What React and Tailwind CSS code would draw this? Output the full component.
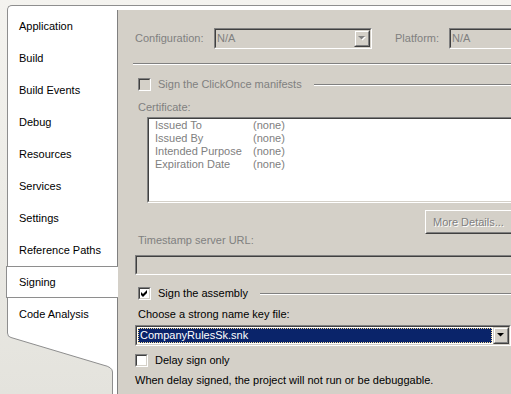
import React from "react";

const tabs = [
  "Application",
  "Build",
  "Build Events",
  "Debug",
  "Resources",
  "Services",
  "Settings",
  "Reference Paths",
  "Signing",
  "Code Analysis",
];

function Sunken({ className = "", inner = "bg-white", children }) {
  return (
    <div className={`shrink-0 border border-t-[#808080] border-l-[#808080] border-b-white border-r-white ${className}`}>
      <div className={`h-full w-full border border-t-[#404040] border-l-[#404040] border-b-[#d4d0c8] border-r-[#d4d0c8] ${inner}`}>
        {children}
      </div>
    </div>
  );
}

function Check({ checked, disabled }) {
  return (
    <Sunken className="w-[13px] h-[13px]" inner={disabled ? "bg-[#d4d0c8]" : "bg-white"}>
      {checked && (
        <svg width="9" height="9" viewBox="0 0 9 9" className="block">
          <polygon points="1,3 3,5 7,1 7,4 3,8 1,6" fill="#000" />
        </svg>
      )}
    </Sunken>
  );
}

function Arrow({ disabled }) {
  return (
    <div className="w-[16px] h-full shrink-0 border border-t-[#d4d0c8] border-l-[#d4d0c8] border-b-[#404040] border-r-[#404040] bg-[#d4d0c8]">
      <div className="h-full border border-t-white border-l-white border-b-[#808080] border-r-[#808080] flex items-center justify-center">
        <svg width="8" height="5" viewBox="0 0 8 5" className="block">
          {disabled && <polygon points="1,1 8,1 4.5,4.5" fill="#fff" />}
          <polygon points="0,0 7,0 3.5,3.5" fill={disabled ? "#808080" : "#000"} />
        </svg>
      </div>
    </div>
  );
}

function Combo({ className, disabled, children }) {
  return (
    <Sunken className={className} inner={`flex ${disabled ? "bg-[#d4d0c8]" : "bg-white"}`}>
      <div className="flex-1 min-w-0 flex">{children}</div>
      <Arrow disabled={disabled} />
    </Sunken>
  );
}

function GroupLine({ className = "" }) {
  return <div className={`flex-1 border-t border-t-[#808080] border-b border-b-white ${className}`} />;
}

export default function App() {
  return (
    <div className="w-[511px] h-[394px] overflow-hidden bg-linear-to-b from-[#f4f3ef] to-[#e4e3dd] pt-[5px] pl-[7px] flex font-['Liberation_Sans',Arial,sans-serif] text-[11px] leading-[13px] text-black">
      {/* tab column */}
      <div className="w-[110px] shrink-0 flex flex-col">
        <div className="border-l border-t border-[#8e8e8e] rounded-tl-[5px] bg-white pt-[4px]">
          {tabs.map((t) =>
            t === "Signing" ? (
              <div
                key={t}
                className="relative z-10 -ml-[2px] w-[112px] h-[32px] border-t border-b border-l border-[#8e8e8e] bg-white flex items-center pl-[12px]"
              >
                {t}
              </div>
            ) : (
              <div key={t} className="h-[32px] flex items-center pl-[11px]">
                {t}
              </div>
            )
          )}
        </div>
        <svg width="110" height="64" viewBox="0 0 110 64" className="block">
          <path d="M0 0 V3 Q0 7 4 7.5 L96 35 Q105.5 37 105.5 42 V64 H110 V0 Z" fill="#fff" />
          <path d="M0.5 0 V3 Q0.5 7 4 7.5 L96 35 Q105.5 37 105.5 42 V64" fill="none" stroke="#8e8e8e" />
        </svg>
      </div>

      {/* page */}
      <div className="flex-1 flex flex-col border-t border-[#8e8e8e] bg-white pt-[4px] min-w-0">
        <div className="flex-1 border-l border-[#808080] bg-[#d4d0c8] overflow-hidden flex flex-col">
          <div className="mt-[18px] ml-[17px] flex items-center">
            <span className="w-[79px] shrink-0 text-[#808080]">Configuration:</span>
            <Combo className="w-[158px] h-[21px]" disabled>
              <span className="pl-[1px] self-center text-[#808080]">N/A</span>
            </Combo>
            <span className="ml-[23px] w-[54px] shrink-0 text-[#808080]">Platform:</span>
            <Combo className="w-[100px] h-[21px]" disabled>
              <span className="pl-[1px] self-center text-[#808080]">N/A</span>
            </Combo>
          </div>

          <div className="mt-[14px] ml-[15px] border-t border-t-[#808080] border-b border-b-white" />

          <div className="mt-[13px] ml-[20px] h-[13px] flex items-center">
            <Check disabled />
            <span className="ml-[7px] text-[#808080] whitespace-nowrap">Sign the ClickOnce manifests</span>
            <GroupLine className="ml-[12px]" />
          </div>

          <div className="mt-[10px] ml-[20px] text-[#808080]">Certificate:</div>

          <Sunken className="mt-[3px] ml-[29px] w-[400px] h-[86px]">
            <div className="pl-[6px] text-[#808080]">
              {[
                ["Issued To", "(none)"],
                ["Issued By", "(none)"],
                ["Intended Purpose", "(none)"],
                ["Expiration Date", "(none)"],
              ].map(([k, v]) => (
                <div key={k} className="flex">
                  <span className="w-[98px]">{k}</span>
                  <span>{v}</span>
                </div>
              ))}
            </div>
          </Sunken>

          <div className="mt-[7px] ml-[307px] w-[90px] h-[24px] shrink-0 border border-t-white border-l-white border-b-[#404040] border-r-[#404040]">
            <div className="h-full border border-t-[#d4d0c8] border-l-[#d4d0c8] border-b-[#808080] border-r-[#808080] flex items-center pl-[6px] text-[#808080] [text-shadow:1px_1px_0_#fff] whitespace-nowrap">
              More Details...
            </div>
          </div>

          <div className="ml-[20px] text-[#808080]">Timestamp server URL:</div>

          <Sunken className="mt-[8px] ml-[17px] w-[380px] h-[20px]" inner="bg-[#d4d0c8]" />

          <div className="mt-[12px] ml-[20px] h-[13px] flex items-center">
            <Check checked />
            <span className="ml-[7px] whitespace-nowrap">Sign the assembly</span>
            <GroupLine className="ml-[12px]" />
          </div>

          <div className="mt-[8px] ml-[20px]">Choose a strong name key file:</div>

          <Combo className="mt-[4px] ml-[17px] w-[376px] h-[21px]">
            <div className="flex-1 m-[1px] bg-[#0a246a] border border-dotted border-[#f5db95] text-white flex items-center pl-[1px]">
              CompanyRulesSk.snk
            </div>
          </Combo>

          <div className="mt-[8px] ml-[17px] h-[13px] flex items-center">
            <Check />
            <span className="ml-[7px] whitespace-nowrap">Delay sign only</span>
          </div>

          <div className="mt-[7px] ml-[17px] whitespace-nowrap">
            When delay signed, the project will not run or be debuggable.
          </div>
        </div>
      </div>
    </div>
  );
}
